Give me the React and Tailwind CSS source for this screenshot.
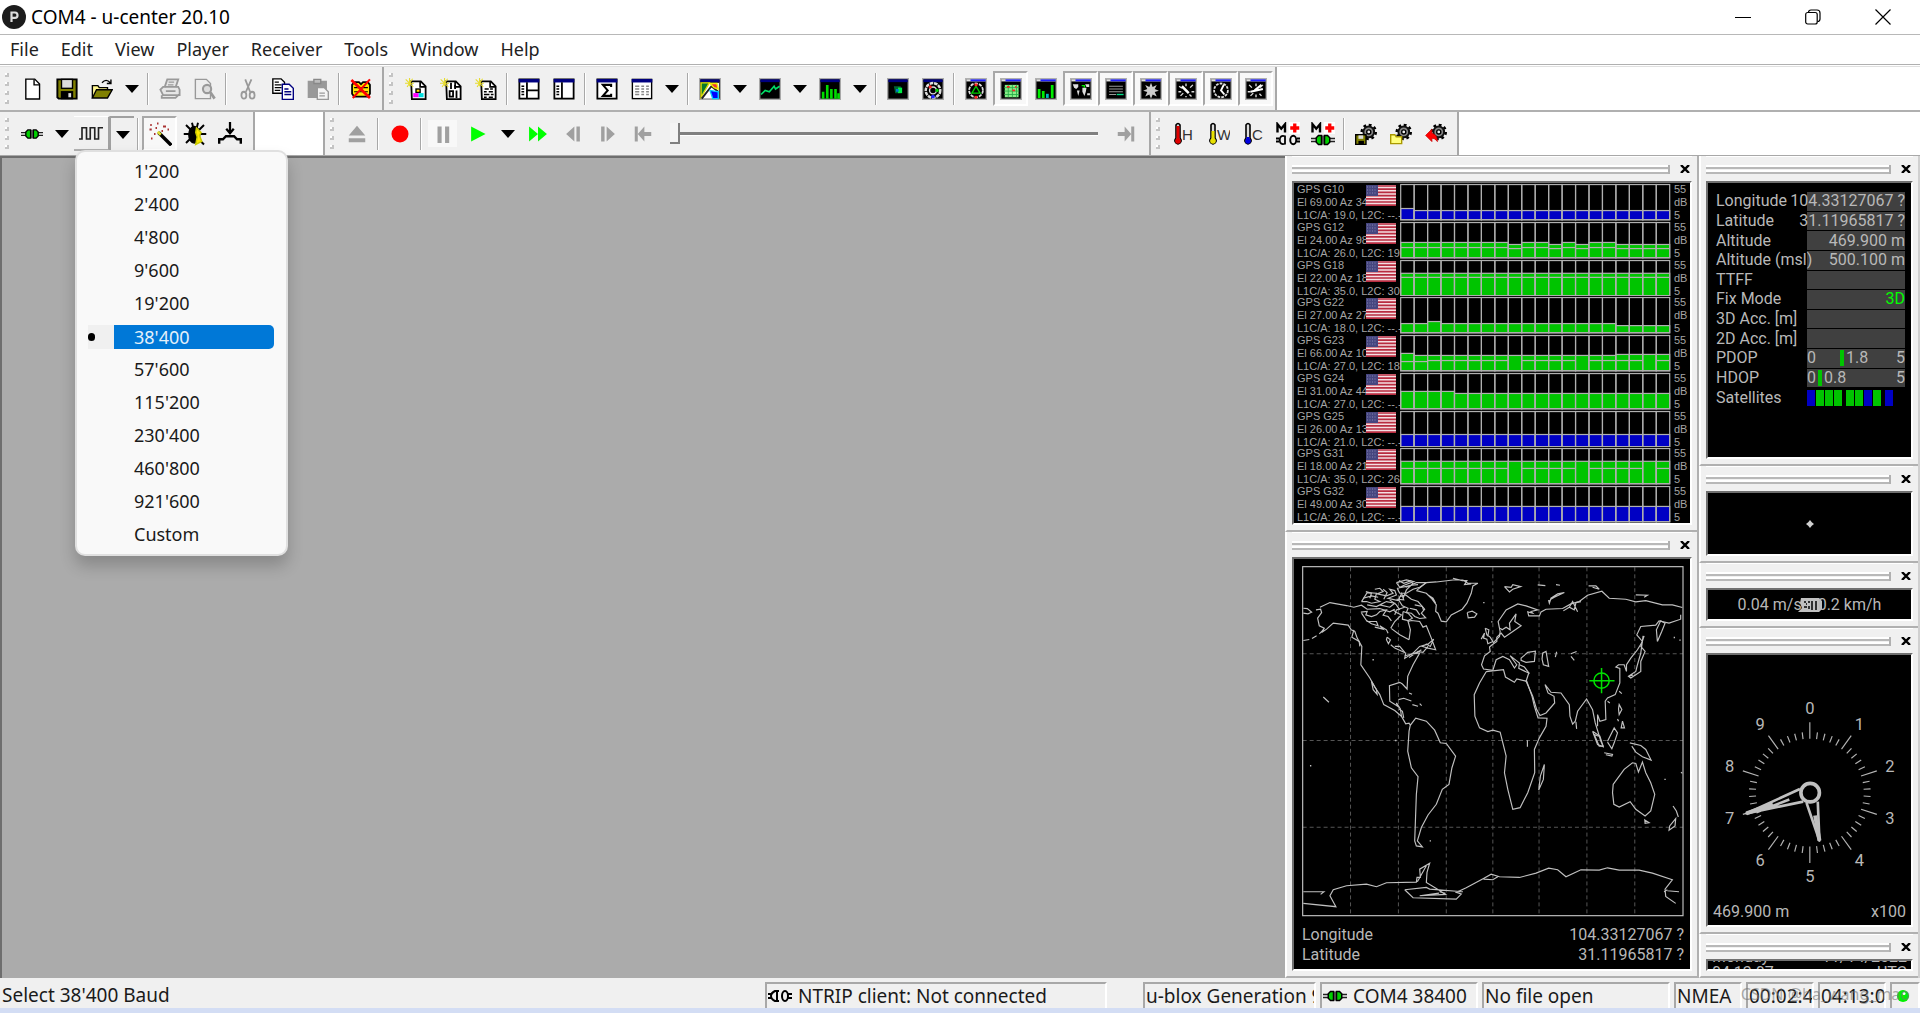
import React, { useState } from 'react';

const Ico = ({ children, size = 'size-[22px]' }) => (
  <svg viewBox="0 0 16 16" className={`${size} shrink-0`} fill="none" stroke="#000" strokeWidth="1">
    {children}
  </svg>
);

// small black view window with a title strip, used by most of the view icons
const Win = ({ children, bar = '#000080' }) => (
  <Ico>
    <rect x="0.5" y="0.5" width="15" height="15" fill="#000" stroke="#a8a8a8" />
    <path d="M1 2h14" stroke={bar} strokeWidth="2" />
    {children}
  </Ico>
);

const DockWin = ({ children }) => (
  <Ico>
    <rect x="0.5" y="0.5" width="15" height="15" fill="#000" stroke="#b0b0b0" />
    <path d="M1 1.7h14" stroke="#e0e0e0" strokeWidth="1.6" />
    <path d="M4 1.7h11" stroke="#2020ff" strokeWidth="1.4" />
    {children}
  </Ico>
);

const Plug = ({ color = '#00d000', y = 8 }) => (
  <g>
    <path d={`M0 ${y - 1}h4M0 ${y + 1}h4M12 ${y - 1}h4M12 ${y + 1}h4`} stroke="#222" />
    <path d={`M5 ${y - 3}h2v6h-2l-1.5-1.5v-3zM9 ${y - 3}h2l1.5 1.5v3l-1.5 1.5h-2z`} fill={color} stroke="#000" />
    <path d={`M8 ${y - 3}v6`} stroke="#000" strokeWidth="0.800" />
  </g>
);

const Gear = () => (
  <g>
    <circle cx="10" cy="6.5" r="5" stroke="#000" strokeWidth="2" strokeDasharray="2 1.9" />
    <circle cx="10" cy="6.5" r="3.9" fill="#888" stroke="#111" strokeWidth="1.4" />
    <circle cx="10" cy="6.5" r="1.5" fill="#eee" stroke="#000" />
  </g>
);

const Page = ({ children }) => (
  <Ico>
    <path d="M4.5 2.5h7l3.500 3.500v9.300h-10z" fill="#fff" strokeWidth="1.300" />
    <path d="M11 2.500v4h4" strokeWidth="1.200" />
    {children}
    <path d="M0.500 1l5.500 5.500M5.500 0.500l-4 6M3.300 0v6M0 3.800h6.500" stroke="#e6dc30" strokeWidth="0.800" />
  </Ico>
);

const Thermo = ({ color, letter, level }) => (
  <svg viewBox="0 0 24 24" className="h-6 w-6 shrink-0">
    <path d="M5 3q2-3 4 0v13q3 4-2 6q-5-2-2-6z" fill="#ddd" stroke="#000" strokeWidth="1.6" />
    <path d={`M7 ${level}V19`} stroke={color} strokeWidth="3" />
    <circle cx="7" cy="19" r="2.8" fill={color} />
    <text x="11" y="18" fontSize="15" fontFamily="Liberation Sans" fill="#333">{letter}</text>
  </svg>
);

const ICONS = {
  New: <Ico><path d="M3.5 0.8h6.5l3.5 3.5v11h-10z" fill="#fff" /><path d="M9.5 1v4h4" /></Ico>,
  Save: <Ico><path d="M1 1h14v14h-13l-1-1z" fill="#808000" strokeWidth="1.4" /><rect x="4" y="1" width="8" height="6.5" fill="#ddd" stroke="#000" /><rect x="4" y="10" width="8" height="5" fill="#000" /><rect x="9" y="11" width="2" height="3" fill="#ddd" stroke="none" /></Ico>,
  Open: <Ico><path d="M1 14.5v-9h4l1 1.5h6v2" fill="#fff68f" /><path d="M1 14.5l3-6h11.5l-3.5 6z" fill="#808000" /><path d="M8 3.5q3-3.5 6 0M14.5 1v3h-3" /></Ico>,
  Print: <Ico><path d="M4 7l2-6h8l-2 6M1 8.5l2-2h11l1 2v4h-12zM2 12.5v2h10l3-3M5 9.5h7" fill="#e6e6e6" stroke="#999" strokeWidth="1.3" /><path d="M7 3h4M6.500 5h4" stroke="#999" /></Ico>,
  Preview: <Ico><path d="M1 1h8l3 3v11h-11z" fill="#eee" stroke="#999" /><circle cx="9.500" cy="8" r="3" stroke="#999" strokeWidth="1.5" fill="#ddd" /><path d="M12 10.500l3 4.500" stroke="#999" strokeWidth="2" /></Ico>,
  Cut: <Ico><path d="M6 1l3.500 9M10.500 1l-4 9" stroke="#999" strokeWidth="1.3" /><ellipse cx="5" cy="12.500" rx="1.800" ry="2.500" stroke="#999" strokeWidth="1.3" /><ellipse cx="11" cy="12.500" rx="1.800" ry="2.500" stroke="#999" strokeWidth="1.3" /></Ico>,
  Copy: <Ico><path d="M0.600 0.600h6l2.500 2.500v8h-8.500z" fill="#fff" /><path d="M2 3h3M2 5h5M2 7h5M2 9h4" /><path d="M7.500 4.500h5l3 3v8h-8z" fill="#fff" stroke="#000080" /><path d="M9 8h3M9 10h5M9 12h5" stroke="#000080" /></Ico>,
  Paste: <Ico><path d="M1 2.500h13v11.500h-13z" fill="#999" stroke="#999" /><path d="M5 1h5v3h-5z" fill="#bbb" stroke="#888" /><path d="M7.500 7h5l3 3v5.500h-8z" fill="#f4f4f4" stroke="#999" /><path d="M9 11h4M9 13h4" stroke="#999" /></Ico>,
  'Clear receiver': <Ico><path d="M3 3h3.500l1.500 1.500L9.500 3H13l1.500 2v6.500L13 13.500H3l-1.500-2V5z" fill="#ffe800" strokeWidth="1.300" /><path d="M3 7h10M3 10h10" strokeWidth="0.800" /><path d="M1 1.500l13.500 13" stroke="#f00" strokeWidth="2" /><path d="M14.500 1L2 14.500" stroke="#f00" strokeWidth="1.500" /></Ico>,
  'New packet view': <Page><rect x="8" y="8" width="3" height="2.500" fill="#ffe800" /><rect x="6" y="11" width="4" height="3" fill="#f0f" stroke="none" /><rect x="10" y="11" width="3.500" height="3" fill="#0dd" stroke="none" /></Page>,
  'New binary view': <Page><path d="M8 3.500v4.500M11 5v3M7 9.500h2.500v4h-2.500zM12 9v5.500" strokeWidth="1.3" /></Page>,
  'New text view': <Page><path d="M7 8h3M11 8h2M6.500 10h2M10 10h3M6.500 12h4M11.500 12h2M6.500 14h2M10 14h3" /></Page>,
  'Split view': <Ico><rect x="1" y="1" width="14" height="14" fill="#fff" strokeWidth="1.3" /><path d="M0.500 2h15" stroke="#000080" strokeWidth="2.500" /><path d="M6.500 3v12M6.500 9h8" strokeWidth="1.3" /><path d="M2.500 6h2M2.500 8h2M2.500 10h2M2.500 12h2" /></Ico>,
  'Tree view': <Ico><rect x="1" y="1" width="14" height="14" fill="#fff" strokeWidth="1.3" /><path d="M0.500 2h15" stroke="#000080" strokeWidth="2.500" /><path d="M6.500 3v12" strokeWidth="1.3" /><path d="M2.500 6h2M2.500 8h2M2.500 10h2M2.500 12h2" /></Ico>,
  Statistics: <Ico><rect x="1" y="1" width="14" height="14" fill="#fff" strokeWidth="1.3" /><path d="M0.500 2h15" stroke="#000080" strokeWidth="2.500" /><path d="M11 6.500v-1.500h-6l3.500 4-3.500 4h6v-1.500" strokeWidth="1.5" /></Ico>,
  'Table view': <Ico><rect x="1" y="1" width="14" height="14" fill="#fff" /><path d="M0.500 2h15" stroke="#000080" strokeWidth="2.500" /><path d="M3 6h3M7.500 6h2M11 6h2M3 8h3M7.500 8h2M11 8h2M3 10h3M7.500 10h2M11 10h2M3 12h3M7.500 12h2M11 12h2" stroke="#888" /></Ico>,
  'Map view': <Win><path d="M1.500 3.500h13v11.500h-13z" fill="#fff" stroke="none" /><path d="M1.500 14V3.500h6z" fill="#0a7a2a" stroke="#dd0" /><path d="M2 15l7-9 5 4" stroke="#222" strokeWidth="1.400" /><path d="M8 4h5l1 4-3-1z" fill="#e33" stroke="#ee0" /><path d="M8 9l6 1v5h-4z" fill="#00f" stroke="#0cf" /></Win>,
  'Chart view': <Win><path d="M1.500 12l3-3 3 1 3.500-4 1 2 3-2" stroke="#0d6" strokeWidth="1.200" /></Win>,
  'Histogram view': <Win><path d="M3 15v-5M6 15V5M9 15V8M12 15v-7M14.200 15v-4" stroke="#0d0" strokeWidth="1.900" /></Win>,
  'Deviation map': <Win><path d="M5 6h5v5h-4z" fill="#063" stroke="none" /><rect x="8" y="7" width="3" height="4" fill="#0e4" stroke="none" /><rect x="6.500" y="8" width="2" height="2" fill="#07c" stroke="none" /></Win>,
  'Sky view': <Win><circle cx="8" cy="9" r="5.300" stroke="#ddd" strokeWidth="1.800" strokeDasharray="2.600 0.600" /><circle cx="8" cy="9" r="2.500" stroke="#ddd" /><circle cx="6" cy="6.500" r="1.200" fill="#f22" stroke="none" /><circle cx="11" cy="9" r="1.200" fill="#0d0" stroke="none" /><circle cx="8" cy="13.500" r="1.400" fill="#22f" stroke="none" /></Win>,
  'Sky dock': <DockWin><circle cx="8" cy="9" r="5" stroke="#ddd" strokeWidth="1.300" strokeDasharray="2.400 0.800" /><path d="M8 6l3 5h-6z" stroke="#0c0" /><rect x="7" y="4" width="2" height="2" fill="#f22" stroke="none" /><rect x="7" y="13" width="2" height="2" fill="#f22" stroke="none" /></DockWin>,
  'Signal history': <DockWin><rect x="3.500" y="5" width="10" height="9" fill="#8e8" stroke="none" /><path d="M3 7h11M3 9.500h11M3 12h11M6 5v9M9 5v9M12 5v9" stroke="#2a4" strokeWidth="0.600" /><path d="M5 6.500h2M9 9h2M11 6.500h1" stroke="#f22" strokeWidth="1.300" /></DockWin>,
  'Signal level': <DockWin><path d="M3 14.500V8M6 14.500v-5M12.500 14.500V5" stroke="#0e0" strokeWidth="2" /><path d="M9 14.500v-3" stroke="#0bb" strokeWidth="2" /></DockWin>,
  'World dock': <DockWin><path d="M2 4.500h4v2L4.500 8 3 7zM5 9h2l-1 4zM9 7h3l-0.500 3-1 3L9 10zM11 4.500h3v2h-2zM12.500 11h2v1.500h-2z" fill="#ddd" stroke="none" /><path d="M8.500 5.500h2v1.500" stroke="#0e0" /></DockWin>,
  'Data dock': <DockWin><path d="M3 6h10M3 8h10M3 10h10M3 12h5" stroke="#999" strokeWidth="0.800" /><path d="M8.500 12h5" stroke="#0d8" /></DockWin>,
  Compass: <DockWin><path d="M8 3.500l1.200 3 3-1.500-1.500 3 3 1.200-3 1 1.500 3.300-3-1.500-1.200 3-1.200-3-3 1.500 1.500-3.300-3-1 3-1.200-1.500-3 3 1.500z" fill="#ccc" stroke="none" /></DockWin>,
  Speedometer: <DockWin><path d="M3 6l2 1.500M8 4v2M13 5l-2 2M2.500 10h2M12 10h2M4 13l2-2M12 13.500l-1.500-1.500M8 14v-1" stroke="#ddd" /><path d="M5 6l5 5" stroke="#fff" strokeWidth="1.800" /></DockWin>,
  Clock: <DockWin><circle cx="8" cy="9" r="5" stroke="#ddd" strokeWidth="1.300" strokeDasharray="2 0.800" /><path d="M10 5l-2 4 2.500 3" stroke="#fff" strokeWidth="1.400" /></DockWin>,
  Altimeter: <DockWin><path d="M3 5l2 2M8 4v2M13 5l-2 2M4 13l2-2M12 13l-1.500-1.500M8 14v-2M2 10h2" stroke="#ddd" /><path d="M4 10l9-2M7 9l5-4" stroke="#fff" strokeWidth="1.500" /></DockWin>,
  Connect: <Ico><Plug /></Ico>,
  Baud: <Ico size="size-6"><path d="M0 12h2V4.500h3V12h2.500V4.500h3V12h2.500V4.500h3" stroke="#222" strokeWidth="1.100" /></Ico>,
  Autobaud: <Ico size="size-6"><path d="M7 7l8.500 8.500" strokeWidth="2.300" /><path d="M6.500 6.500l2 2" stroke="#dd3" strokeWidth="1.800" /><path d="M1.500 2h1M6 1h1M10 3h2M1 5h1.500M4 8h1M2 11h1M9 6h1M13 5h1M5 4h1" stroke="#a33" strokeWidth="1.300" /></Ico>,
  Debug: <Ico size="size-6"><path d="M2 2l4 4M14 2l-4 4M0.500 8h4M15.500 8h-4M2 14l4-4M14 15l-4-4M6 0.500l1 4M10 0.500l-1 4" strokeWidth="1.300" /><ellipse cx="7.500" cy="8.500" rx="3.600" ry="5.500" fill="#000" /><path d="M9 4l3 3-1 2 1.500 4-4 2 1-5-1-3z" fill="#ffe800" stroke="#cc0" /></Ico>,
  'Update firmware': <Ico size="size-6"><path d="M8 0v7M5.500 4.500L8 7.500l2.500-3" strokeWidth="1.500" /><path d="M0.800 14.500v-3h2.500l2-2h5.400l2 2h2.500v3" strokeWidth="1.600" /></Ico>,
  Eject: <Ico><path d="M8 2l6 7H2zM2 11h12v3H2z" fill="#a0a0a0" stroke="none" /></Ico>,
  Record: <Ico><circle cx="8" cy="8" r="6.200" fill="#f00" stroke="none" /></Ico>,
  Pause: <Ico><path d="M4 2.500h3v12H4zM9.500 2.500h3v12h-3z" fill="#a0a0a0" stroke="none" /></Ico>,
  Play: <Ico><path d="M3 2.500l10.500 5.500L3 13.500z" fill="#0f0" stroke="none" /></Ico>,
  'Fast forward': <Ico><path d="M1.500 2.500l6.500 5.500-6.500 5.500zM8 2.500l6.500 5.500L8 13.500z" fill="#0f0" stroke="none" /></Ico>,
  'Step back': <Ico><path d="M9 2.500v11L3 8zM10.500 2.500h2.500v11h-2.500z" fill="#a0a0a0" stroke="none" /></Ico>,
  'Step forward': <Ico><path d="M7 2.500v11l6-5.500zM3 2.500h2.500v11H3z" fill="#a0a0a0" stroke="none" /></Ico>,
  'To start': <Ico><path d="M2 2.500h2.200v11H2zM9 2.500v4h5v3H9v4L4.200 8z" fill="#a0a0a0" stroke="none" /></Ico>,
  'To end': <Ico><path d="M14 2.500h-2.200v11H14zM7 2.500v4H2v3h5v4L11.800 8z" fill="#a0a0a0" stroke="none" /></Ico>,
  'Hot start': <Thermo color="#e00000" letter="H" level="4" />,
  'Warm start': <Thermo color="#e8e000" letter="W" level="9" />,
  'Cold start': <Thermo color="#0000e0" letter="C" level="15" />,
  'NTRIP server': <Ico size="size-6"><path d="M8.500 0h7.500v8h-7.500z" fill="#fff" stroke="none" /><path d="M1 7V1.500l2.500 3 2.500-3V7" strokeWidth="1.600" /><path d="M12.500 1v6M9.500 4h6" stroke="#f00" strokeWidth="2.200" /><path d="M0 11h2M0 13h2M14 11h2M14 13h2M6 9.500q-3.500-1-3.500 2.500t3.500 2.500z" strokeWidth="1.200" /><ellipse cx="11.500" cy="12" rx="2" ry="2.800" strokeWidth="1.300" /></Ico>,
  'NTRIP client': <Ico size="size-6"><path d="M8.500 0h7.500v8h-7.500z" fill="#fff" stroke="none" /><path d="M1 7V1.500l2.500 3 2.500-3V7" strokeWidth="1.600" /><path d="M12.500 1v6M9.500 4h6" stroke="#f00" strokeWidth="2.200" /><Plug y={12} /></Ico>,
  'Save configuration': <Ico><Gear /><path d="M0.500 8.500h7.500v7h-7.500z" fill="#808000" /><path d="M2.500 9h3.500v2.500h-3.500z" fill="#ddd" stroke="none" /><path d="M2.500 13h4v2.500h-4z" fill="#000" stroke="none" /></Ico>,
  'Load configuration': <Ico><Gear /><path d="M0.500 15v-6.500h3l1 1.500h4v5z" fill="#ffff7a" stroke="#a90" /></Ico>,
  'Revert configuration': <Ico><Gear /><path d="M5 4.500v3q4 1 4 6q-1.500-2.500-4-2.500v2.500L0.500 9z" fill="#f00" stroke="#c00" strokeWidth="0.600" /></Ico>,
};

const Grip = () => (
  <div className="mx-[5px] flex w-1 shrink-0 flex-col justify-center gap-[5px]">
    {[0, 1, 2, 3].map((i) => (
      <span key={i} className="size-1 border-r-2 border-b-2 border-[#c4c4c4] bg-white" />
    ))}
  </div>
);

const Sep = () => (
  <div className="flex w-2 shrink-0 items-center justify-center">
    <span className="h-8 w-[2px] border-r border-white bg-[#a8a8a8]" />
  </div>
);

const Arrow = ({ label }) => (
  <button aria-label={label} className="flex w-[25px] shrink-0 items-center justify-center">
    <svg viewBox="0 0 14 8" className="h-2 w-[14px]"><path d="M0 0h14L7 8z" /></svg>
  </button>
);

const BUTTON_STYLES = {
  '*': 'my-1 flex w-[35px] shrink-0 items-center justify-center border-2 border-t-[#a8a8a8] border-l-[#a8a8a8] border-r-white border-b-white bg-[#f8f8f8]',
  '-': 'mx-[3px] my-2 flex w-[29px] shrink-0 items-center justify-center bg-[#f8f8f8]',
};

const ToolButton = ({ name, look }) => (
  <button aria-label={name} className={BUTTON_STYLES[look] || 'flex w-[35px] shrink-0 items-center justify-center'}>
    {ICONS[name]}
  </button>
);

// '|' is a separator, 'v' a drop-down arrow, a leading '*' a pressed button, '-' a pressed and disabled one
const Tools = ({ items }) =>
  items.map((item, i) => {
    if (item === '|') return <Sep key={i} />;
    if (item === 'v') return <Arrow key={i} label={`${items[i - 1]} options`} />;
    const look = BUTTON_STYLES[item[0]] ? item[0] : '';
    return <ToolButton key={i} name={look ? item.slice(1) : item} look={look} />;
  });

const Band = ({ children, pad = 'pr-[6px]' }) => (
  <div className={`flex h-[43px] shrink-0 border-r-2 border-[#a8a8a8] bg-[#f0f0f0] ${pad}`}>
    <Grip />
    {children}
  </div>
);

const RATES = ["1'200", "2'400", "4'800", "9'600", "19'200", "38'400", "57'600", "115'200", "230'400", "460'800", "921'600", 'Custom'];

const BaudMenu = ({ value, onChange }) => (
  <div
    role="menu"
    className="absolute top-[38px] left-px z-20 w-[213px] rounded-[10px] border-2 border-[#e0e0e0] bg-[#f9f9f9] py-[3px] text-[18px] text-[#1a1a1a] shadow-[0_10px_16px_rgba(0,0,0,0.2)]"
  >
    {RATES.map((rate) => (
      <button
        key={rate}
        role="menuitemradio"
        aria-checked={rate === value}
        onClick={() => onChange(rate)}
        className="flex h-[33px] w-full items-center pr-3 pl-[11px] text-left"
      >
        <span className={rate === value ? 'flex h-6 w-[26px] items-center bg-[#f0f0f0]' : 'w-[26px]'}>
          {rate === value && <span className="h-2 w-[7px] rounded-full bg-black" />}
        </span>
        <span className={rate === value ? 'h-6 flex-1 rounded-r-[5px] bg-[#0078d7] pl-5 leading-6 text-[#e4f0fa]' : 'flex-1 pl-5'}>
          {rate}
        </span>
      </button>
    ))}
  </div>
);

const Panel = ({ title, className = '', children }) => (
  <section aria-label={title} className={`flex flex-col border-b-2 border-l-2 border-b-[#b0b0b0] border-l-white bg-[#f0f0f0] px-[5px] pb-[5px] ${className}`}>
    <header className="flex h-[25px] shrink-0 items-center gap-2 border-t border-white">
      <div className="flex flex-1 flex-col gap-px border-r-2 border-[#b0b0b0]">
        <span className="h-1 border-b-2 border-[#b8b8b8] bg-white" />
        <span className="h-1 border-b-2 border-[#b8b8b8] bg-white" />
      </div>
      <button aria-label={`Close ${title}`} className="p-[2px]">
        <svg viewBox="0 0 10 8" className="h-2 w-[10px]"><path d="M1 0l8 8M9 0L1 8" stroke="#000" strokeWidth="2.400" /></svg>
      </button>
    </header>
    <div className="min-h-0 flex-1 overflow-hidden border-2 border-t-[#707070] border-l-[#707070] border-r-white border-b-white bg-black text-[#b8b8b8]">
      {children}
    </div>
  </section>
);

const fill = (base, changes = {}) => Array.from({ length: 20 }, (_, i) => (i in changes ? changes[i] : base));
const gaps = { 8: null, 13: null, 18: null };

const SATELLITES = [
  { id: 'G10', el: '69.00', az: '34', l1: '19.0', l2: '--.-', color: '#0000c4', bars: fill(9, { 0: 11 }) },
  { id: 'G12', el: '24.00', az: '98', l1: '26.0', l2: '19.0', color: '#00c400', bars: fill(15, { 8: 13, 11: 13, 13: 13, 16: 13, 17: 13, 18: 13, 19: 13 }), marks: fill(10, { 8: 9, 11: 9, 13: 9, 16: 9, 17: 9, 18: 9, 19: 9 }) },
  { id: 'G18', el: '22.00', az: '18', l1: '35.0', l2: '30.0', color: '#00c400', bars: fill(22), marks: fill(18) },
  { id: 'G22', el: '27.00', az: '27', l1: '18.0', l2: '--.-', color: '#00c400', bars: fill(9, { 2: 11, 16: 7, 17: 7, 18: 7, 19: 7 }) },
  { id: 'G23', el: '66.00', az: '10', l1: '27.0', l2: '18.0', color: '#00c400', bars: fill(15, { 0: 17, 16: 16, 17: 16, 18: 16, 19: 16 }), marks: fill(10, { 0: 9, 1: 9, ...gaps }) },
  { id: 'G24', el: '31.00', az: '44', l1: '27.0', l2: '--.-', color: '#00c400', bars: fill(15, { 0: 17, 1: 17, 2: 17, 3: 17 }) },
  { id: 'G25', el: '26.00', az: '13', l1: '21.0', l2: '--.-', color: '#0000c4', bars: fill(12) },
  { id: 'G31', el: '18.00', az: '21', l1: '35.0', l2: '26.0', color: '#00c400', bars: fill(22), marks: fill(15, gaps) },
  { id: 'G32', el: '49.00', az: '30', l1: '26.0', l2: '--.-', color: '#0000c4', bars: fill(15) },
];

const Flag = () => (
  <svg viewBox="0 0 30 21" className="h-[21px] w-[30px]" aria-label="United States">
    <rect width="30" height="21" fill="#f4dfe2" />
    <path d="M0 1h30M0 4.200h30M0 7.400h30M0 10.600h30M0 13.800h30M0 17h30M0 20.200h30" stroke="#b82c40" strokeWidth="1.700" />
    <rect width="12" height="11" fill="#46467f" />
    <path d="M1 2h10M1 5h10M1 8h10" stroke="#8585b5" strokeDasharray="1 1.500" />
  </svg>
);

const SatRow = ({ sat }) => (
  <div className="flex min-h-0 flex-1 text-[#a4a4a4]">
    <div className="relative w-[106px] shrink-0 overflow-hidden pl-[3px] text-[11px] leading-[13px] whitespace-nowrap">
      <p>GPS {sat.id}</p>
      <p>El {sat.el} Az {sat.az}</p>
      <p>L1C/A: {sat.l1}, L2C: {sat.l2}</p>
      <span className="absolute top-[2px] right-1"><Flag /></span>
    </div>
    <svg viewBox="0 0 272 37" preserveAspectRatio="none" className="h-full min-w-0 flex-1" aria-label={`${sat.id} signal history`}>
      {sat.bars.map((h, i) => (
        <g key={i} stroke="#b0b0b0" strokeWidth="1.200">
          <rect x={i * 13.5 + 0.7} y={36 - h} width="13.5" height={h} fill={sat.color} />
          {sat.marks && sat.marks[i] && <path d={`M${i * 13.5 + 0.7} ${36 - sat.marks[i]}h13.5`} />}
          <rect x={i * 13.5 + 0.7} y="1.500" width="13.5" height="34.500" fill="none" />
        </g>
      ))}
    </svg>
    <div className="w-[19px] shrink-0 pl-[3px] text-[11px] leading-[13px]">
      <p>55</p>
      <p>dB</p>
      <p>5</p>
    </div>
  </div>
);

const COAST = [
  // Americas
  'M70 175L82 176 95 187 84 192 70 190M108 180L122 178 125 188 113 205 118 228 133 235 125 248 140 238 160 220 205 226 214 240 225 245 232 265 246 290 243 345 270 385 285 412 300 435 312 465 345 483 365 500 378 523 388 521 392 527 408 506 440 515 465 542 482 580 500 582 528 620 517 655 508 705 488 720 470 765 445 797 425 835 413 875 428 893 410 890 405 875 410 735 415 682 395 655 384 605 388 545 392 525',
  'M120 172L150 158 200 167 222 172 245 166 262 178 300 176 330 186 345 178M130 240L118 252M110 258L96 266M88 269L70 272',
  'M365 500L362 478 350 460 354 470 330 455 329 408 360 398 368 403 382 418 384 380 400 345 420 310 400 310 375 326 378 310 345 295 333 285M372 505L368 485 358 478',
  'M275 395L290 420 292 434 280 420 275 395M222 240L216 262 238 275 240 290M356 450L372 446 395 454M398 465L415 470M388 430L397 434M420 462L426 468',
  'M333 235L345 215 365 195 350 188 340 180M388 270L360 255 333 235M388 270L392 240 385 215 395 212 420 215 430 232 440 228 455 265 468 300 445 295 428 290 440 283 452 290 462 268 445 283 420 290 400 310M322 262L332 270 326 282 320 270 322 262M345 290L360 290 375 308M375 318L410 310 425 300M388 323L415 305 430 308 445 290',
  'M245 155L262 128 290 130 285 148 300 155 275 160 260 155 245 155M285 118L300 115 310 125 292 132 320 138 340 130 330 118 345 122 350 135 325 145 355 152 365 132M350 98L380 90 402 95 375 105 360 112 350 98M352 115L388 108 410 98 440 98 420 112 400 118 380 130 360 130 352 115M400 100L380 120 370 145M360 140L378 135 395 148 415 155 435 178 425 190 438 204 420 206 405 200 395 190 380 188 385 175 368 168 358 152 360 140',
  'M243 187L262 185 258 195 275 200 290 195 300 185 320 180 310 196 325 200 335 213M245 190L262 215 290 215 295 228 275 222 260 212M285 232L310 238 300 228 320 240 325 250M370 185L385 190 398 205 385 212 368 208 370 185M300 165L330 172 345 160 320 155 300 165M345 195L350 180 375 172M262 165L290 170 305 162M390 175L410 180 420 195',
  'M250 145L275 138 295 142M258 125L275 130 270 145M310 118L322 128 312 148M365 128L372 150 350 148M330 150L350 165 360 180M358 92L372 100 395 92M378 112L395 106 415 104M405 165L428 170 432 182',
  'M410 122L440 98 470 96 520 90 550 90 565 100 595 100 580 108 575 130 562 160 548 178 515 195 500 216 485 214 475 190 468 185 470 165 455 145 440 130 410 122M563 188L578 184 592 192 585 202 566 204 563 188M445 135L460 145 468 160M520 85L548 92 562 92 555 104 575 102',
  // Europe, Asia and Africa
  'M640 280L660 260 662 245 656 215 680 180 715 162 740 168 775 180 755 185 760 190 745 186 748 198 780 198 785 186 800 178 850 176 875 162 900 155 925 136 968 124 990 145 1040 148 1070 156 1100 152 1150 165 1180 165 1210 173M1205 195L1205 208 1170 220 1140 213 1130 226 1085 230 1073 255 1090 275 1075 300 1055 325 1042 345 1042 365',
  'M662 235L668 240 680 232 692 240 690 220 710 192 706 215 725 228 700 245 675 262 665 250 652 262 652 275 638 285 630 292 632 305 615 318 606 345 612 358 640 362 650 330 670 320 690 330 705 355 712 345 692 318 710 332 720 340 718 356 748 370 740 395 760 440 772 480 782 498 800 490 826 460 824 440 806 430 797 405 815 428 845 430 870 465 872 500 880 524 888 515 895 485 922 448 940 480 948 520 965 575 972 590 960 590 945 555 958 560',
  'M1042 365L1035 345 1018 345 1010 352 1022 356 1022 400 1008 435 985 445 978 455 980 510 962 515 955 495 955 530M617 235L622 255 632 262 640 275 625 282 622 268 612 265 615 250 605 268M617 235L628 240 625 260M725 325L745 308 768 304 765 335 740 338 725 332zM790 310L800 305 808 350 792 345 788 328zM828 322L832 306M875 312L892 305M720 345L735 352 750 372',
  'M620 366L672 360 678 382 705 398 712 388 742 395 758 440 765 470 776 505 803 506 800 530 780 565 765 600 766 670 745 730 722 775 700 780 685 720 675 670 680 620 662 548 640 542 625 546 600 535 586 500 584 435 600 400 620 366M778 722L783 680 795 645 792 690zM744 572L744 592M890 517L892 538',
  'M675 110L695 112 700 104 724 110 700 118 690 126 675 110M775 105L798 107M810 160L815 145 835 132 855 128 825 142 808 152zM852 183L870 172 885 180 890 158 905 155M830 104L842 106M928 108L950 108 960 118 940 112M1070 135L1105 136 1095 142M870 172L880 155 895 186',
  'M1135 275L1132 240 1145 213 1158 220 1148 245 1135 275M1095 258L1085 290 1098 305 1085 335 1085 365 1055 385 1048 380 1070 365 1075 345 1085 310 1092 258M1048 380L1062 376M1020 465L1028 480 1020 495 1018 478zM1030 515L1036 535 1026 535zM1015 508L1018 515M1020 425L1028 432M985 455L992 460M875 320L885 332',
  // Oceania
  'M940 545L962 560 972 592 955 585 940 545M985 575L1005 535 1015 550 1005 580 998 598 985 578M975 610L1000 615 998 620 980 616M1052 580L1085 588 1100 600 1116 632 1090 622 1070 608 1058 590M1002 705L1035 660 1060 640 1070 642 1078 668 1090 638 1100 670 1115 700 1127 735 1115 785 1098 800 1070 780 1053 757 1020 773 1004 765 1000 730zM1097 812L1110 820 1098 822zM1182 770L1192 785 1198 803M1190 808L1188 830 1170 843 1172 830zM130 442L147 458M1206 668L1210 672',
  // Antarctica
  'M70 1028L132 1028 122 1036M70 1063L168 1073 150 1040 160 1022 200 1010 260 1005 290 1013 320 1001 410 999 412 985 422 985 420 960 450 942 442 970 440 1000 470 1018 498 1036 420 1040 478 1032M375 1022L400 1046 530 1050 545 1035 530 1030 560 1016 612 988 635 975 660 983 720 985 770 972 808 957 835 962 860 983 905 962 960 963 985 956 1020 963 1080 963 1120 972 1180 992 1158 1020 1160 1042 1190 1063M375 1022L440 1015 450 1020 550 1028 535 1028M612 990L640 992 655 983M1165 1025L1200 1028M480 1028L497 1033M413 998L440 950M1155 1028L1165 1022',
];

const WorldMap = () => (
  <svg viewBox="66 48 1149 1056" preserveAspectRatio="none" className="min-h-0 w-full flex-1" aria-label="World map">
    <path
      d="M212 52V1100M356 52V1100M500 52V1100M640 52V1100M779 52V1100M923 52V1100M1067 52V1100M68 312H1212M68 573H1212M68 834H1212"
      stroke="#555"
      strokeWidth="3"
      strokeDasharray="12 9"
    />
    {COAST.map((d, i) => (
      <path key={i} d={d} fill="none" stroke="#c0c0c0" strokeWidth="3.500" />
    ))}
    <path d="M90 649h4M346 573h4M278 330h4M611 158h4M450 875h4M1156 690h4M1184 263h4M1201 271h4M635 216h4" stroke="#c0c0c0" strokeWidth="4" />
    <rect x="68" y="50" width="1144" height="1050" fill="none" stroke="#c0c0c0" strokeWidth="3.500" />
    <g fill="none" stroke="#00e000" strokeWidth="4.500">
      <circle cx="967" cy="393" r="23" />
      <path d="M967 355v76M930 393h76" />
    </g>
  </svg>
);

const Value = ({ children, className = '' }) => (
  <span className={`flex h-full w-[98px] shrink-0 items-center justify-end bg-[#404040] whitespace-nowrap ${className}`}>{children}</span>
);

const Dop = ({ value, lead }) => (
  <Value>
    <span>0</span>
    <span className={`h-4 w-1 bg-[#00c400] ${lead}`} />
    <span className="flex-1 pl-[2px]">{value}</span>
    <span>5</span>
  </Value>
);

const DATA = [
  ['Longitude', <Value>104.33127067 ?</Value>],
  ['Latitude', <Value>31.11965817 ?</Value>],
  ['Altitude', <Value>469.900 m</Value>],
  ['Altitude (msl)', <Value>500.100 m</Value>],
  ['TTFF', <Value />],
  ['Fix Mode', <Value className="text-[#00ff00]">3D</Value>],
  ['3D Acc. [m]', <Value />],
  ['2D Acc. [m]', <Value />],
  ['PDOP', <Dop value="1.8" lead="ml-6" />],
  ['HDOP', <Dop value="0.8" lead="ml-[2px]" />],
];

const SatBlocks = () => (
  <span className="flex w-[98px] gap-px">
    {['b', 'g', 'g', 'g', '', 'g', 'g', 'b', 'g', '', 'b'].map((c, i) => (
      <span key={i} className={c === 'b' ? 'h-4 w-2 bg-[#0000c4]' : c === 'g' ? 'h-4 w-2 bg-[#00c400]' : 'h-4 w-[2px]'} />
    ))}
  </span>
);

const polar = (r, step, steps) => {
  const a = (step / steps) * 2 * Math.PI;
  return [362 + r * Math.sin(a), 331 - r * Math.cos(a)];
};

const AltimeterDial = () => (
  <svg viewBox="54 -40 614 692" className="mx-auto block w-full shrink-0" aria-label="Altimeter">
    {Array.from({ length: 50 }, (_, i) => {
      const [x1, y1] = polar(163, i, 50);
      const [x2, y2] = polar(i % 5 ? 184 : 213, i, 50);
      return <line key={i} x1={x1} y1={y1} x2={x2} y2={y2} stroke="#b4b4b4" strokeWidth="3.500" />;
    })}
    {Array.from({ length: 10 }, (_, i) => {
      const [x, y] = polar(255, i, 10);
      return (
        <text key={i} x={x} y={y + 16} textAnchor="middle" fontSize="50" fontFamily="Roboto" fill="#b8b8b8">{i}</text>
      );
    })}
    <g stroke="#c0c0c0" fill="none" strokeWidth="8" strokeLinejoin="round">
      <path d="M332 320L170 394 342 358M200 390L300 352" />
      <path d="M352 362L391 476 386 358" />
      <path d="M391 476L378 400" strokeWidth="12" />
      <path d="M170 394L250 366" strokeWidth="12" />
      <circle cx="363" cy="331" r="28" fill="#000" strokeWidth="11" />
    </g>
  </svg>
);

const StatusCell = ({ className = '', children }) => (
  <div className={`flex items-center overflow-hidden border-t-2 border-r-2 border-l-2 border-t-[#a8a8a8] border-l-[#a8a8a8] border-r-white pl-px whitespace-nowrap ${className}`}>
    {children}
  </div>
);

export default function App() {
  const [baud, setBaud] = useState("38'400");
  const [menuOpen, setMenuOpen] = useState(true);
  const [position, setPosition] = useState(0);

  const selectBaud = (rate) => {
    setBaud(rate);
    setMenuOpen(false);
  };

  return (
    <div className="flex h-screen flex-col overflow-hidden bg-white font-['Noto_Sans',sans-serif] text-[18px] text-black">
      <div className="flex h-[35px] shrink-0 items-center border-b border-[#b8b8b8] pr-[2px] pl-[2px]">
        <svg viewBox="0 0 24 24" className="size-6">
          <circle cx="12" cy="12" r="12" fill="#1c1c1c" />
          <path d="M9.500 17V7.500h3.500q2.500 0 2.500 2.700t-2.500 2.700h-3" fill="none" stroke="#ddd" strokeWidth="2.200" />
        </svg>
        <h1 className="ml-[5px] flex-1 text-[19px]">COM4 - u-center 20.10</h1>
        <button aria-label="Minimize" className="flex w-[70px] justify-center">
          <svg viewBox="0 0 16 16" className="size-4"><path d="M0 8.500h16" stroke="#000" /></svg>
        </button>
        <button aria-label="Restore" className="flex w-[70px] justify-center">
          <svg viewBox="0 0 16 16" className="size-4" fill="none" stroke="#000" strokeWidth="1.200">
            <rect x="0.700" y="3.500" width="11.500" height="11.500" rx="2" />
            <path d="M3.500 3.500q0-2.500 2.500-2.500h6q3 0 3 3v6q0 2.500-2.500 2.500" />
          </svg>
        </button>
        <button aria-label="Close" className="flex w-[70px] justify-center">
          <svg viewBox="0 0 16 16" className="size-4"><path d="M0.500 0.500l15 15M15.500 0.500l-15 15" stroke="#000" strokeWidth="1.200" /></svg>
        </button>
      </div>

      <nav className="flex h-[30px] shrink-0 items-center gap-[22px] border-b border-[#b0b0b0] pl-[10px] text-[#222]">
        {['File', 'Edit', 'View', 'Player', 'Receiver', 'Tools', 'Window', 'Help'].map((item) => (
          <button key={item}>{item}</button>
        ))}
      </nav>

      <div className="mt-px flex shrink-0 border-t border-b-2 border-t-[#e0e0e0] border-b-[#b0b0b0]">
        <Band pad="pr-1">
          <Tools items={['New', 'Save', 'Open', 'v', '|', 'Print', 'Preview', '|', 'Cut', 'Copy', 'Paste', '|', 'Clear receiver']} />
        </Band>
        <Band pad="pr-[2px]">
          <Tools
            items={[
              'New packet view', 'New binary view', 'New text view', '|', 'Split view', 'Tree view', '|', 'Statistics', 'Table view', 'v', '|',
              'Map view', 'v', 'Chart view', 'v', 'Histogram view', 'v', '|', 'Deviation map', 'Sky view', '|', 'Sky dock',
              '*Signal history', 'Signal level', '*World dock', '*Data dock', '*Compass', '*Speedometer', '*Clock', '*Altimeter',
            ]}
          />
        </Band>
      </div>

      <div className="flex shrink-0">
        <Band>
          <Tools items={['Connect', 'v']} />
          <div className="relative flex items-stretch">
            <button aria-label="Baud" className="my-1 flex w-9 items-center justify-center border-t border-r-2 border-b-2 border-t-white border-r-[#a0a0a0] border-b-[#b0b0b0]">
              {ICONS.Baud}
            </button>
            <button
              aria-label="Select baud rate"
              aria-expanded={menuOpen}
              onClick={() => setMenuOpen(!menuOpen)}
              className="my-1 flex w-6 items-center justify-center border-t-2 border-l border-[#a0a0a0]"
            >
              <svg viewBox="0 0 14 8" className="h-2 w-[14px]"><path d="M0 0h14L7 8z" /></svg>
            </button>
            {menuOpen && <BaudMenu value={baud} onChange={selectBaud} />}
          </div>
          <Tools items={['|', '*Autobaud', 'Debug', 'Update firmware']} />
        </Band>
        <div className="w-[70px] shrink-0 border-r-2 border-[#a8a8a8]" />
        <Band>
          <Tools items={['Eject', '|', 'Record', '|', '-Pause', 'Play', 'v', 'Fast forward', 'Step back', 'Step forward', 'To start']} />
          <label className="mx-[10px] flex w-[428px] items-center">
            <span className="sr-only">Position</span>
            <input
              type="range"
              value={position}
              onChange={(e) => setPosition(e.target.value)}
              className="h-7 w-full appearance-none bg-transparent [&::-webkit-slider-runnable-track]:h-1 [&::-webkit-slider-runnable-track]:border-b [&::-webkit-slider-runnable-track]:border-white [&::-webkit-slider-runnable-track]:bg-[#808080] [&::-webkit-slider-thumb]:-mt-[9px] [&::-webkit-slider-thumb]:h-[21px] [&::-webkit-slider-thumb]:w-[10px] [&::-webkit-slider-thumb]:appearance-none [&::-webkit-slider-thumb]:border-r-2 [&::-webkit-slider-thumb]:border-b-2 [&::-webkit-slider-thumb]:border-[#808080] [&::-webkit-slider-thumb]:bg-[#f4f4f4]"
            />
          </label>
          <Tools items={['To end']} />
        </Band>
        <Band pad="pr-1">
          <Tools items={['Hot start', 'Warm start', 'Cold start', 'NTRIP server', 'NTRIP client', '|', 'Save configuration', 'Load configuration', 'Revert configuration']} />
        </Band>
      </div>

      <div className="flex min-h-0 flex-1 border-t border-[#a8a8a8]">
        <main className="flex-1 border-t-2 border-l-2 border-[#6e6e6e] bg-[#ababab]" />

        <div className="flex w-[414px] shrink-0 flex-col border-r-2 border-r-[#b0b0b0] font-['Liberation_Sans',sans-serif]">
          <Panel title="Satellite signal history">
            <div className="flex h-[340px] flex-col">
              {SATELLITES.map((sat) => (
                <SatRow key={sat.id} sat={sat} />
              ))}
            </div>
          </Panel>
          <Panel title="World position" className="min-h-0 flex-1">
            <div className="flex h-full flex-col pt-[7px] pr-[6px] pb-1 pl-2 font-['Roboto',sans-serif] text-[16px] leading-5">
              <WorldMap />
              <div className="mt-2 flex justify-between"><span>Longitude</span><span>104.33127067 ?</span></div>
              <div className="flex justify-between"><span>Latitude</span><span>31.11965817 ?</span></div>
            </div>
          </Panel>
        </div>

        <div className="flex w-[221px] shrink-0 flex-col border-r-2 border-[#d0d0d0] font-['Roboto',sans-serif] text-[16px] leading-[18px]">
          <Panel title="Data">
            <div className="h-[274px] pt-[9px] pr-[6px] pl-2">
              <div className="grid h-[215px] auto-rows-fr gap-px">
                {DATA.map(([label, value]) => (
                  <div key={label} className="flex min-h-0 items-center justify-between">
                    <span className="relative z-10 w-0 whitespace-nowrap">{label}</span>
                    {value}
                  </div>
                ))}
                <div className="flex min-h-0 items-center justify-between">
                  <span>Satellites</span>
                  <SatBlocks />
                </div>
              </div>
            </div>
          </Panel>
          <Panel title="Compass">
            <div className="flex h-[61px] items-center justify-center">
              <svg viewBox="0 0 8 8" className="size-2"><path d="M4 0l1.800 2.200L8 4 5.800 5.800 4 8 2.200 5.800 0 4l2.200-1.800z" fill="#d0d0d0" /></svg>
            </div>
          </Panel>
          <Panel title="Speed">
            <div className="flex h-[29px] items-center justify-center">
              <span>0.04 m/s</span>
              <svg viewBox="0 0 24 14" className="-ml-1 h-[14px] w-6">
                <path d="M3 0h18l3 3v8l-3 3H0l4-4-2-5z" fill="#c0c0c0" />
                <path d="M6 4h2M10 4h2M6 9h3M11 8v3M14 3v9M18 3v9M8 6h1" stroke="#000" strokeWidth="1.500" />
              </svg>
              <span className="-ml-1">0.2 km/h</span>
            </div>
          </Panel>
          <Panel title="Altimeter">
            <div className="flex h-[270px] flex-col justify-end">
              <AltimeterDial />
              <div className="mt-1 mb-1 flex justify-between px-[5px]"><span>469.900 m</span><span>x100</span></div>
            </div>
          </Panel>
          <Panel title="Clock" className="min-h-0 flex-1">
            <div className="flex h-full flex-col justify-center px-1 leading-4">
              <div className="flex shrink-0 justify-between"><span>Monday</span><span>11/14/2022</span></div>
              <div className="flex shrink-0 justify-between"><span>04:13:07</span><span>UTC</span></div>
            </div>
          </Panel>
        </div>
      </div>

      <footer className="relative flex h-[30px] shrink-0 gap-1 bg-[#f0f0f0] pt-1 text-[19px] text-[#1a1a1a]">
        <p className="flex flex-1 items-center pl-[2px]">Select {baud} Baud</p>
        <StatusCell className="w-[342px]">
          <svg viewBox="0 0 24 14" className="mr-[6px] h-[14px] w-6" fill="none" stroke="#000" strokeWidth="2">
            <path d="M0 5h4M0 9h4M11 2H7Q3 4 3 7t4 5h4M9 2v10M20 5h4M20 9h4" />
            <ellipse cx="17" cy="7" rx="3" ry="5" />
          </svg>
          NTRIP client: Not connected
        </StatusCell>
        <StatusCell className="ml-8 w-[173px]">u-blox Generation 9</StatusCell>
        <StatusCell className="w-[158px]">
          <Ico size="size-6"><Plug /></Ico>
          <span className="ml-[6px]">COM4 {baud.replace("'", '')}</span>
        </StatusCell>
        <StatusCell className="w-[188px]">No file open</StatusCell>
        <StatusCell className="w-[68px]">NMEA</StatusCell>
        <StatusCell className="w-[68px]">00:02:41</StatusCell>
        <StatusCell className="w-[68px]">04:13:08</StatusCell>
        <StatusCell className="w-[30px]">
          <svg viewBox="0 0 12 12" className="ml-1 size-3"><circle cx="6" cy="6" r="6" fill="#00f000" /><circle cx="7" cy="3.500" r="1.500" fill="#fff" /></svg>
        </StatusCell>
        <span className="pointer-events-none absolute top-1 right-[10px] text-[16px] text-[#777]/60">CSDN @ba_wang_mao</span>
      </footer>
      <div className="h-[5px] shrink-0 bg-[#d3ddf4]" />
    </div>
  );
}
